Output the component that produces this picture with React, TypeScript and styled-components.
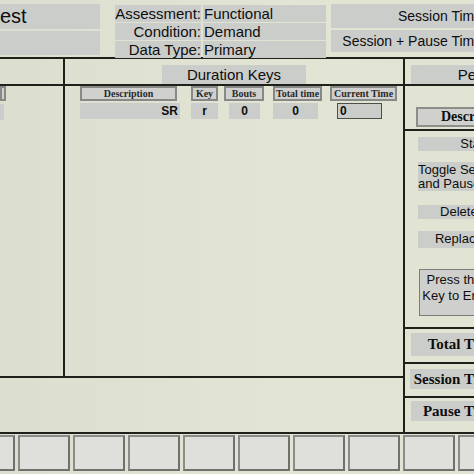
import React from "react";
import styled, { createGlobalStyle } from "styled-components";

const GlobalStyle = createGlobalStyle`
  html, body {
    margin: 0;
    padding: 0;
    overflow: hidden;
    background: #e1e4d3;
  }
  body {
    font-family: "Liberation Sans", Arial, sans-serif;
    color: #0e0e0e;
  }
`;

const LINE = "#1d2119";
const FIELD = "#cbcdca";

const Screen = styled.div`
  width: 640px;
  height: 474px;
  display: flex;
  flex-direction: column;
  background: linear-gradient(90deg, #dcdfcf 0%, #e2e5d4 45%, #e0e3d1 100%);
`;

const TopBar = styled.div`
  height: 57px;
  display: flex;
  align-items: flex-start;
  border-bottom: 2px solid ${LINE};
`;

const TitleCol = styled.div`
  width: 100px;
  padding-top: 4px;
  display: flex;
  flex-direction: column;
  gap: 2px;
`;

const TitleField = styled.div<{ $h: number }>`
  height: ${(p) => p.$h}px;
  background: ${FIELD};
  font-size: 20px;
  line-height: ${(p) => p.$h}px;
  white-space: nowrap;
  overflow: hidden;
`;

const InfoGrid = styled.div`
  margin-left: 15px;
  padding-top: 5px;
  display: grid;
  grid-template-columns: 86px 123px;
  grid-auto-rows: 17px;
  column-gap: 2px;
  row-gap: 1px;
  font-size: 15px;
  line-height: 17px;
`;

const InfoLabel = styled.div`
  background: ${FIELD};
  text-align: right;
  white-space: nowrap;
`;

const InfoValue = styled.div`
  background: ${FIELD};
  padding-left: 1px;
  white-space: nowrap;
`;

const SessionCol = styled.div`
  margin-left: 5px;
  width: 160px;
  padding-top: 4px;
  display: flex;
  flex-direction: column;
  gap: 2px;
`;

const SessionField = styled.div<{ $h: number }>`
  height: ${(p) => p.$h}px;
  line-height: ${(p) => p.$h}px;
  background: ${FIELD};
  text-align: right;
  padding-right: 9px;
  font-size: 14px;
  white-space: nowrap;
`;

const Body = styled.div`
  height: 373px;
  display: flex;
  border-bottom: 2px solid ${LINE};
`;

const LeftArea = styled.div`
  width: 403px;
  display: flex;
  flex-direction: column;
`;

const KeysArea = styled.div`
  height: 317px;
  display: flex;
  border-bottom: 2px solid ${LINE};
`;

const LowerArea = styled.div`
  flex: 1;
`;

const SideCol = styled.div`
  width: 63px;
  border-right: 2px solid ${LINE};
`;

const DurationCol = styled.div`
  flex: 1;
`;

const PaneHeader = styled.div<{ $center?: boolean }>`
  height: 27px;
  box-sizing: border-box;
  border-bottom: 2px solid ${LINE};
  display: flex;
  align-items: flex-end;
  justify-content: ${(p) => (p.$center ? "center" : "flex-start")};
`;

const HeaderBox = styled.div<{ $w: number; $ml?: number }>`
  width: ${(p) => p.$w}px;
  margin-left: ${(p) => p.$ml ?? 0}px;
  height: 19px;
  line-height: 19px;
  background: ${FIELD};
  font-size: 15px;
  text-align: center;
  white-space: nowrap;
  flex-shrink: 0;
`;

const TableRow = styled.div<{ $pl: number; $mt?: number }>`
  display: flex;
  padding-left: ${(p) => p.$pl}px;
  margin-top: ${(p) => p.$mt ?? 0}px;
`;

const HeadCell = styled.div<{ $w: number; $ml: number }>`
  box-sizing: border-box;
  width: ${(p) => p.$w}px;
  margin-left: ${(p) => p.$ml}px;
  height: 15px;
  border: 2px solid #878986;
  background: #d0d1ce;
  font-family: "Liberation Serif", "Times New Roman", serif;
  font-weight: bold;
  font-size: 10px;
  line-height: 11px;
  text-align: center;
  white-space: nowrap;
  overflow: hidden;
  color: #2a2a2a;
`;

const DataCell = styled.div<{ $w: number; $ml: number; $align?: string; $input?: boolean }>`
  box-sizing: border-box;
  width: ${(p) => p.$w}px;
  margin-left: ${(p) => p.$ml}px;
  height: 16px;
  background: ${FIELD};
  border: ${(p) => (p.$input ? "1px solid #4d4f4c" : "none")};
  font-size: 12px;
  font-weight: bold;
  line-height: ${(p) => (p.$input ? 14 : 16)}px;
  text-align: ${(p) => p.$align ?? "center"};
  padding: 0 2px;
  white-space: nowrap;
`;

const RightPanel = styled.div`
  flex: 1;
  border-left: 2px solid ${LINE};
  display: flex;
  flex-direction: column;
`;

const Section = styled.div<{ $h: number; $line?: boolean }>`
  height: ${(p) => p.$h}px;
  flex-shrink: 0;
  border-bottom: ${(p) => (p.$line ? `2px solid ${LINE}` : "none")};
  display: flex;
  flex-direction: column;
  align-items: flex-start;
`;

const DescButton = styled.div`
  box-sizing: border-box;
  margin: 21px 0 0 11px;
  width: 119px;
  height: 20px;
  border: 2px solid #8c8e8b;
  background: #d0d1ce;
  font-family: "Liberation Serif", "Times New Roman", serif;
  font-weight: bold;
  font-size: 14px;
  line-height: 16px;
  text-align: center;
`;

const ActionButton = styled.div<{ $mt: number; $h: number; $left?: boolean }>`
  margin: ${(p) => p.$mt}px 0 0 13px;
  width: 112px;
  height: ${(p) => p.$h}px;
  background: ${FIELD};
  font-size: 13px;
  line-height: 14px;
  padding-top: ${(p) => (p.$h > 15 ? 1 : 0)}px;
  box-sizing: border-box;
  text-align: ${(p) => (p.$left ? "left" : "center")};
  white-space: nowrap;
`;

const HintBox = styled.div`
  box-sizing: border-box;
  margin: 21px 0 0 14px;
  width: 120px;
  height: 47px;
  border: 1px solid #7b7d7a;
  background: #cfd0cd;
  font-size: 13px;
  line-height: 16px;
  padding-top: 2px;
  text-align: center;
  white-space: nowrap;
`;

const TimeBox = styled.div<{ $mt: number; $h: number; $ml: number }>`
  margin: ${(p) => p.$mt}px 0 0 ${(p) => p.$ml}px;
  width: 200px;
  height: ${(p) => p.$h}px;
  background: ${FIELD};
  display: flex;
  align-items: center;
  font-family: "Liberation Serif", "Times New Roman", serif;
  font-weight: bold;
  font-size: 15px;
`;

const TimeLabel = styled.span<{ $w: number }>`
  width: ${(p) => p.$w}px;
  text-align: right;
  white-space: nowrap;
`;

const KeyRow = styled.div`
  display: flex;
  gap: 3px;
  margin-left: -37px;
  padding-top: 1px;
`;

const KeyButton = styled.div`
  box-sizing: border-box;
  width: 52px;
  height: 36px;
  flex-shrink: 0;
  border: 2px solid #8a8c89;
  border-right-color: #6f716e;
  border-bottom-color: #6f716e;
  background: #dfe0dc;
`;

const headCols = [
  { label: "Description", w: 97, ml: 0 },
  { label: "Key", w: 27, ml: 14 },
  { label: "Bouts", w: 40, ml: 6 },
  { label: "Total time", w: 49, ml: 9 },
  { label: "Current Time", w: 67, ml: 8 },
];

const App = () => {
  return (
    <>
      <GlobalStyle />
      <Screen>
        <TopBar>
          <TitleCol>
            <TitleField $h={25}>est</TitleField>
            <TitleField $h={24} />
          </TitleCol>
          <InfoGrid>
            <InfoLabel>Assessment:</InfoLabel>
            <InfoValue>Functional</InfoValue>
            <InfoLabel>Condition:</InfoLabel>
            <InfoValue>Demand</InfoValue>
            <InfoLabel>Data Type:</InfoLabel>
            <InfoValue>Primary</InfoValue>
          </InfoGrid>
          <SessionCol>
            <SessionField $h={24}>Session Time</SessionField>
            <SessionField $h={22}>Session + Pause Time</SessionField>
          </SessionCol>
        </TopBar>

        <Body>
          <LeftArea>
            <KeysArea>
              <SideCol>
                <PaneHeader />
                <TableRow $pl={0}>
                  <HeadCell $w={6} $ml={0} />
                </TableRow>
                <TableRow $pl={0} $mt={3}>
                  <DataCell $w={3} $ml={0} />
                </TableRow>
              </SideCol>
              <DurationCol>
                <PaneHeader $center>
                  <HeaderBox $w={144}>Duration Keys</HeaderBox>
                </PaneHeader>
                <TableRow $pl={15}>
                  {headCols.map((c) => (
                    <HeadCell key={c.label} $w={c.w} $ml={c.ml}>
                      {c.label}
                    </HeadCell>
                  ))}
                </TableRow>
                <TableRow $pl={15} $mt={2}>
                  <DataCell $w={100} $ml={0} $align="right">
                    SR
                  </DataCell>
                  <DataCell $w={27} $ml={11}>r</DataCell>
                  <DataCell $w={31} $ml={11}>0</DataCell>
                  <DataCell $w={45} $ml={13}>0</DataCell>
                  <DataCell $w={45} $ml={19} $align="left" $input>
                    0
                  </DataCell>
                </TableRow>
              </DurationCol>
            </KeysArea>
            <LowerArea />
          </LeftArea>

          <RightPanel>
            <PaneHeader>
              <HeaderBox $w={217} $ml={6}>
                Performance Keys
              </HeaderBox>
            </PaneHeader>
            <Section $h={43} $line>
              <DescButton>Description</DescButton>
            </Section>
            <Section $h={196} $line>
              <ActionButton $mt={6} $h={14}>Start</ActionButton>
              <ActionButton $mt={11} $h={29} $left>
                Toggle Session
                <br />
                and Pause Time
              </ActionButton>
              <ActionButton $mt={14} $h={14}>Delete Bout</ActionButton>
              <ActionButton $mt={12} $h={17}>Replace Bout</ActionButton>
              <HintBox>
                Press the Session
                <br />
                Key to End Session
              </HintBox>
            </Section>
            <Section $h={33} $line>
              <TimeBox $mt={4} $h={23} $ml={6}>
                <TimeLabel $w={86}>Total Time</TimeLabel>
              </TimeBox>
            </Section>
            <Section $h={32} $line>
              <TimeBox $mt={5} $h={20} $ml={5}>
                <TimeLabel $w={87}>Session Time</TimeLabel>
              </TimeBox>
            </Section>
            <Section $h={32}>
              <TimeBox $mt={3} $h={20} $ml={6}>
                <TimeLabel $w={86}>Pause Time</TimeLabel>
              </TimeBox>
            </Section>
          </RightPanel>
        </Body>

        <KeyRow>
          {Array.from({ length: 12 }).map((_, i) => (
            <KeyButton key={i} />
          ))}
        </KeyRow>
      </Screen>
    </>
  );
};

export default App;
